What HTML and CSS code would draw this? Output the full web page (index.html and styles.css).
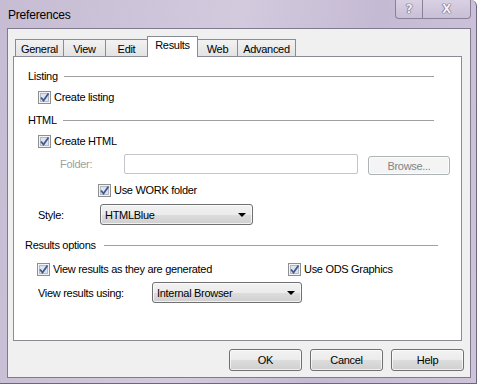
FILE: index.html
```html
<!DOCTYPE html>
<html lang="en">
<head>
    <meta charset="UTF-8">
    <title>Preferences</title>
    <link rel="stylesheet" href="styles.css">
</head>
<body>
    <svg class="defs" width="0" height="0">
        <symbol id="chk" viewBox="0 0 13 13">
            <rect x="0.5" y="0.5" width="12" height="12" fill="#f4f4f4" stroke="#8e8f8f"/>
            <rect x="2.5" y="2.5" width="8" height="8" fill="#dfe3ea" stroke="#b4b9c2"/>
            <path d="M3 6.5 L5.5 9.5 L10.5 2.5" fill="none" stroke="#3d5a98" stroke-width="1.8"/>
        </symbol>
    </svg>

    <div class="window">
        <div class="titlebar">
            <span class="title">Preferences</span>
            <div class="caption-buttons">
                <span class="cap-btn cap-help">?</span>
                <span class="cap-btn cap-close">X</span>
            </div>
        </div>

        <div class="client">
            <div class="tabs">
                <span class="tab tab-general">General</span>
                <span class="tab tab-view">View</span>
                <span class="tab tab-edit">Edit</span>
                <span class="tab tab-results active">Results</span>
                <span class="tab tab-web">Web</span>
                <span class="tab tab-advanced">Advanced</span>
            </div>

            <div class="panel">
                <div class="group group-listing">
                    <span>Listing</span>
                    <span class="rule"></span>
                </div>
                <div class="row row-listing">
                    <label class="check"><svg width="13" height="13"><use href="#chk"/></svg>Create listing</label>
                </div>

                <div class="group group-html">
                    <span>HTML</span>
                    <span class="rule"></span>
                </div>
                <div class="row row-html">
                    <label class="check"><svg width="13" height="13"><use href="#chk"/></svg>Create HTML</label>
                </div>
                <div class="row row-folder">
                    <span class="folder-label">Folder:</span>
                    <span class="textbox"></span>
                    <span class="button browse">Browse...</span>
                </div>
                <div class="row row-work">
                    <label class="check"><svg width="13" height="13"><use href="#chk"/></svg>Use WORK folder</label>
                </div>
                <div class="row row-style">
                    <span class="field-label style-label">Style:</span>
                    <span class="combo combo-style">HTMLBlue<i class="arrow"></i></span>
                </div>

                <div class="group group-results">
                    <span>Results options</span>
                    <span class="rule"></span>
                </div>
                <div class="row row-options">
                    <label class="check check-generated"><svg width="13" height="13"><use href="#chk"/></svg>View results as they are generated</label>
                    <label class="check check-ods"><svg width="13" height="13"><use href="#chk"/></svg>Use ODS Graphics</label>
                </div>
                <div class="row row-using">
                    <span class="field-label using-label">View results using:</span>
                    <span class="combo combo-browser">Internal Browser<i class="arrow"></i></span>
                </div>
            </div>

            <div class="actions">
                <span class="button">OK</span>
                <span class="button">Cancel</span>
                <span class="button">Help</span>
            </div>
        </div>
    </div>
</body>
</html>
```

FILE: styles.css
```css
* {
    margin: 0;
    padding: 0;
    box-sizing: border-box;
}

body {
    font-family: "Liberation Sans", Arial, sans-serif;
    font-size: 11px;
    letter-spacing: -0.3px;
    color: #000;
    background: #fff;
}

.defs {
    position: absolute;
}

.window {
    position: relative;
    width: 477px;
    height: 384px;
    background: linear-gradient(100deg, #c6bcd3 0%, #d3cade 45%, #c5bad3 70%, #cdc4da 100%);
    border-right: 1px solid #6e6680;
    border-bottom: 1px solid #6e6680;
    border-radius: 0 6px 0 0;
}

.titlebar {
    height: 28px;
    display: flex;
    align-items: center;
    padding-left: 8px;
}

.title {
    font-size: 12px;
    letter-spacing: -0.2px;
    color: #000;
    padding-top: 1px;
}

.caption-buttons {
    position: absolute;
    top: 0;
    right: 5px;
    display: flex;
}

.cap-btn {
    height: 19px;
    display: flex;
    align-items: center;
    justify-content: center;
    font-family: "DejaVu Sans", sans-serif;
    font-weight: bold;
    font-size: 12px;
    color: #f4f1f8;
    text-shadow: 0 0 1px #5b5170, 0 0 1px #5b5170, 0 0 1px #5b5170;
    background: linear-gradient(#d9d1e3, #c9bfd6);
    border: 1px solid #8b8099;
    border-top: none;
}

.cap-help {
    width: 28px;
    border-radius: 0 0 0 4px;
}

.cap-close {
    width: 48px;
    border-left: none;
    border-radius: 0 0 4px 0;
}

.client {
    margin-left: 7px;
    width: 464px;
    height: 350px;
    background: #f0f0f0;
    border: 1px solid #807a8e;
    padding-top: 7px;
    display: flex;
    flex-direction: column;
}

.tabs {
    height: 20px;
    margin-left: 7px;
    display: flex;
    align-items: flex-end;
}

.tab {
    height: 17px;
    display: flex;
    align-items: center;
    justify-content: center;
    padding-top: 1px;
    border: 1px solid #898c95;
    border-bottom: none;
    background: linear-gradient(#f2f2f2, #e3e3e3);
    margin-left: -1px;
}

.tab:first-child {
    margin-left: 0;
}

.tab-general { width: 49px; }
.tab-view { width: 43px; }
.tab-edit { width: 43px; }
.tab-results { width: 51px; }
.tab-web { width: 41px; }
.tab-advanced { width: 59px; }

.tab.active {
    position: relative;
    z-index: 1;
    height: 21px;
    margin-bottom: -1px;
    align-items: flex-start;
    padding-top: 2px;
    background: #fff;
}

.panel {
    margin-left: 5px;
    width: 449px;
    height: 285px;
    background: #fff;
    border: 1px solid #898c95;
}

.group {
    height: 14px;
    display: flex;
    align-items: center;
}

.rule {
    flex: 1;
    height: 1px;
    margin-left: 6px;
    background: #a0a0a0;
}

.group-listing {
    margin-top: 12px;
    padding-left: 14px;
    margin-right: 27px;
}

.group-html {
    margin-top: 9px;
    padding-left: 14px;
    margin-right: 27px;
}

.group-results {
    margin-top: 13px;
    padding-left: 11px;
    margin-right: 23px;
}

.group-results .rule {
    margin-left: 8px;
}

.row {
    display: flex;
    align-items: center;
}

.check {
    height: 14px;
    display: flex;
    align-items: center;
}

.check svg {
    margin-right: 3px;
    flex-shrink: 0;
}

.row-listing {
    margin-top: 7px;
    padding-left: 24px;
}

.row-html {
    margin-top: 7px;
    padding-left: 24px;
}

.row-folder {
    margin-top: 6px;
    height: 20px;
    align-items: flex-start;
}

.folder-label {
    color: #a0a0a0;
    width: 110px;
    padding-left: 46px;
    line-height: 20px;
}

.textbox {
    width: 234px;
    height: 20px;
    border: 1px solid #c3c5ca;
    border-radius: 2px;
    background: #fff;
}

.button {
    width: 73px;
    height: 22px;
    display: flex;
    align-items: center;
    justify-content: center;
    border: 1px solid #707070;
    border-radius: 3px;
    background: linear-gradient(#f2f2f2 0%, #ebebeb 50%, #dddddd 51%, #cfcfcf 100%);
    box-shadow: inset 0 0 0 1px rgba(255, 255, 255, 0.7);
}

.browse {
    width: 82px;
    height: 19px;
    margin-top: 2px;
    margin-left: 10px;
    color: #838383;
    border-color: #adb2b5;
    background: #f4f4f4;
}

.row-work {
    margin-top: 9px;
    padding-left: 84px;
}

.row-style {
    margin-top: 7px;
}

.field-label {
    padding-left: 24px;
}

.style-label {
    width: 86px;
}

.using-label {
    width: 138px;
}

.combo {
    position: relative;
    height: 21px;
    display: flex;
    align-items: center;
    padding-left: 4px;
    border: 1px solid #707070;
    border-radius: 3px;
    background: linear-gradient(#f2f2f2 0%, #ebebeb 50%, #dddddd 51%, #cfcfcf 100%);
    box-shadow: inset 0 0 0 1px rgba(255, 255, 255, 0.7);
}

.combo-style {
    width: 153px;
}

.combo-browser {
    width: 150px;
}

.arrow {
    position: absolute;
    right: 6px;
    top: 8px;
    border-left: 4px solid transparent;
    border-right: 4px solid transparent;
    border-top: 4px solid #000;
}

.row-options {
    margin-top: 10px;
}

.check-generated {
    margin-left: 23px;
    width: 251px;
}

.row-using {
    margin-top: 6px;
}

.actions {
    margin-top: 8px;
    padding-right: 6px;
    display: flex;
    justify-content: flex-end;
    gap: 8px;
}
```
